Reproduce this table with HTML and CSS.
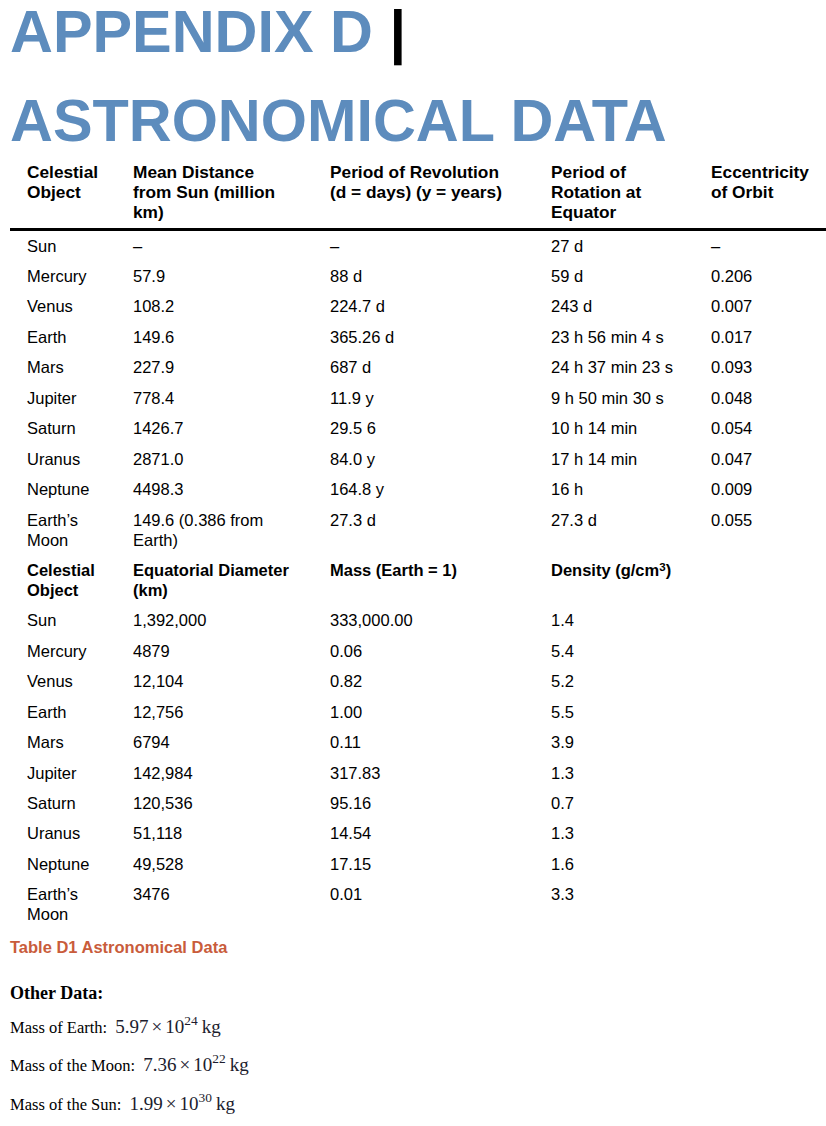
FILE: index.html
```html
<!DOCTYPE html>
<html lang="en">
<head>
<meta charset="utf-8">
<title>Appendix D | Astronomical Data</title>
<link rel="stylesheet" href="styles.css">
</head>
<body>
<div class="page">
  <h1 class="title">APPENDIX D <span class="bar">|</span> ASTRONOMICAL DATA</h1>
  <table class="data">
    <colgroup>
      <col class="c1"><col class="c2"><col class="c3"><col class="c4"><col class="c5">
    </colgroup>
    <thead>
      <tr>
        <th>Celestial Object</th>
        <th>Mean Distance from Sun (million km)</th>
        <th>Period of Revolution (d = days) (y = years)</th>
        <th>Period of Rotation at Equator</th>
        <th>Eccentricity of Orbit</th>
      </tr>
    </thead>
    <tbody>
      <tr><td>Sun</td><td>–</td><td>–</td><td>27 d</td><td>–</td></tr>
      <tr><td>Mercury</td><td>57.9</td><td>88 d</td><td>59 d</td><td>0.206</td></tr>
      <tr><td>Venus</td><td>108.2</td><td>224.7 d</td><td>243 d</td><td>0.007</td></tr>
      <tr><td>Earth</td><td>149.6</td><td>365.26 d</td><td>23 h 56 min 4 s</td><td>0.017</td></tr>
      <tr><td>Mars</td><td>227.9</td><td>687 d</td><td>24 h 37 min 23 s</td><td>0.093</td></tr>
      <tr><td>Jupiter</td><td>778.4</td><td>11.9 y</td><td>9 h 50 min 30 s</td><td>0.048</td></tr>
      <tr><td>Saturn</td><td>1426.7</td><td>29.5 6</td><td>10 h 14 min</td><td>0.054</td></tr>
      <tr><td>Uranus</td><td>2871.0</td><td>84.0 y</td><td>17 h 14 min</td><td>0.047</td></tr>
      <tr><td>Neptune</td><td>4498.3</td><td>164.8 y</td><td>16 h</td><td>0.009</td></tr>
      <tr><td>Earth’s Moon</td><td>149.6 (0.386 from Earth)</td><td>27.3 d</td><td>27.3 d</td><td>0.055</td></tr>
      <tr class="subhead">
        <td>Celestial Object</td>
        <td>Equatorial Diameter (km)</td>
        <td>Mass (Earth = 1)</td>
        <td>Density (g/cm<sup>3</sup>)</td>
        <td></td>
      </tr>
      <tr><td>Sun</td><td>1,392,000</td><td>333,000.00</td><td>1.4</td><td></td></tr>
      <tr><td>Mercury</td><td>4879</td><td>0.06</td><td>5.4</td><td></td></tr>
      <tr><td>Venus</td><td>12,104</td><td>0.82</td><td>5.2</td><td></td></tr>
      <tr><td>Earth</td><td>12,756</td><td>1.00</td><td>5.5</td><td></td></tr>
      <tr><td>Mars</td><td>6794</td><td>0.11</td><td>3.9</td><td></td></tr>
      <tr><td>Jupiter</td><td>142,984</td><td>317.83</td><td>1.3</td><td></td></tr>
      <tr><td>Saturn</td><td>120,536</td><td>95.16</td><td>0.7</td><td></td></tr>
      <tr><td>Uranus</td><td>51,118</td><td>14.54</td><td>1.3</td><td></td></tr>
      <tr><td>Neptune</td><td>49,528</td><td>17.15</td><td>1.6</td><td></td></tr>
      <tr><td>Earth’s Moon</td><td>3476</td><td>0.01</td><td>3.3</td><td></td></tr>
    </tbody>
  </table>
  <p class="caption">Table D1 Astronomical Data</p>
  <div class="other">
    <p class="other-title">Other Data:</p>
    <p class="mass">Mass of Earth: <span class="math">5.97<span class="times">×</span>10<sup>24</sup><span class="unit">kg</span></span></p>
    <p class="mass">Mass of the Moon: <span class="math">7.36<span class="times">×</span>10<sup>22</sup><span class="unit">kg</span></span></p>
    <p class="mass">Mass of the Sun: <span class="math">1.99<span class="times">×</span>10<sup>30</sup><span class="unit">kg</span></span></p>
  </div>
</div>
</body>
</html>
```
FILE: styles.css
```css
html, body {
  margin: 0;
  padding: 0;
  background: #ffffff;
  overflow-x: hidden;
}

.page {
  padding-left: 10px;
  font-family: "Liberation Sans", Arial, sans-serif;
  color: #000;
}

.title {
  margin: -13px 0 -8.4px 0;
  font-size: 59.4px;
  line-height: 89px;
  font-weight: bold;
  color: #5d8cbd;
}

.title .bar {
  color: #000;
}

.data {
  width: 816px;
  table-layout: fixed;
  border-collapse: collapse;
  font-size: 16.5px;
  line-height: 20px;
}

.c1 { width: 106px; }
.c2 { width: 197px; }
.c3 { width: 221px; }
.c4 { width: 160px; }
.c5 { width: 132px; }

.data th,
.data td {
  text-align: left;
  vertical-align: top;
  padding: 5.23px 10px 5.23px 17px;
}

.data th:nth-child(2),
.data td:nth-child(2),
.data th:nth-child(3),
.data td:nth-child(3) {
  padding-right: 20px;
}

.data thead th {
  font-size: 17.3px;
  font-weight: bold;
  padding-top: 5px;
  padding-bottom: 6px;
  border-bottom: 3px solid #000;
}

.data tbody tr:first-child td {
  padding-top: 5px;
}

.data .subhead td {
  font-weight: bold;
}

.data sup {
  font-size: 0.7em;
  line-height: 0;
  vertical-align: 0.45em;
}

.caption {
  margin: 7px 0 0 0;
  font-size: 16.5px;
  line-height: 20px;
  font-weight: bold;
  color: #c95c3b;
}

.other {
  font-family: "Liberation Serif", "Times New Roman", serif;
  margin-top: 26px;
}

.other-title {
  margin: 0;
  font-size: 18px;
  line-height: 20px;
  font-weight: bold;
}

.mass {
  margin: 13px 0 0 0;
  font-size: 16.5px;
  line-height: 24px;
}

.mass + .mass {
  margin-top: 14.5px;
}

.math {
  font-size: 19px;
  line-height: 20px;
  color: #1c1c2e;
  margin-left: 4px;
}

.math .times {
  margin: 0 3px;
}

.math sup {
  font-size: 0.707em;
  line-height: 0;
  vertical-align: 0.62em;
}

.math .unit {
  margin-left: 4px;
}
```
